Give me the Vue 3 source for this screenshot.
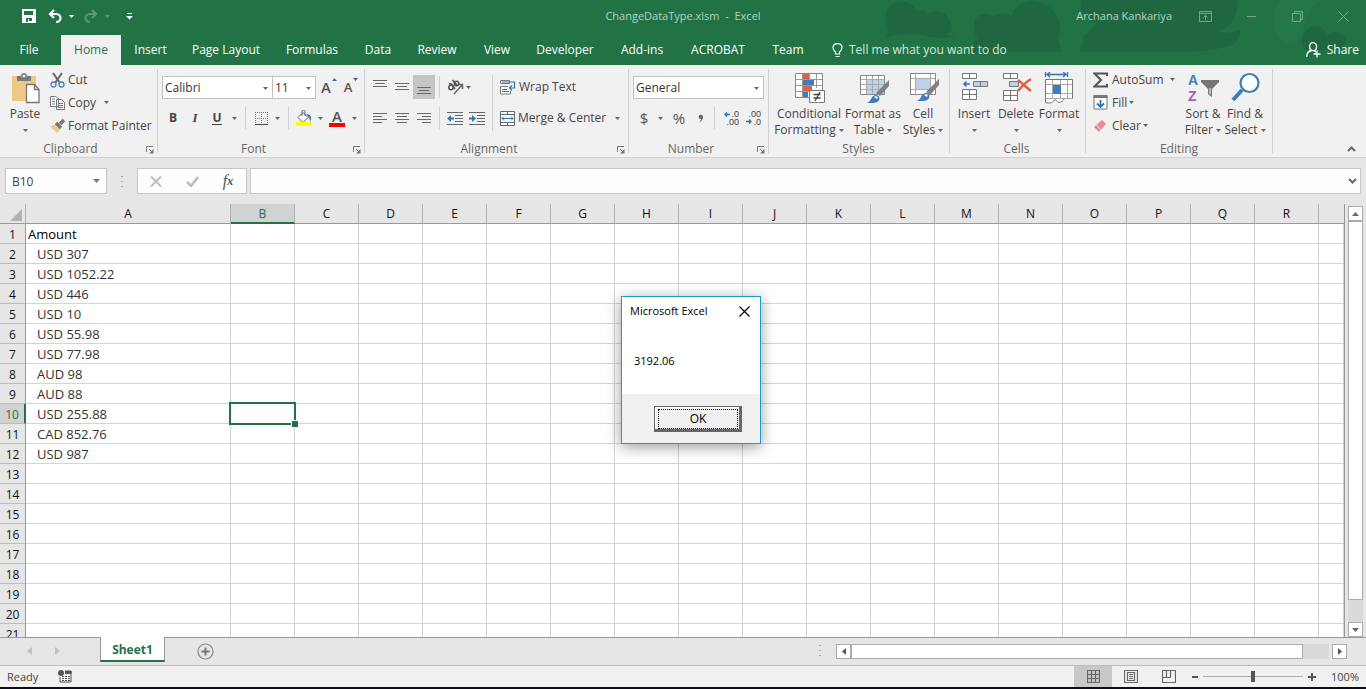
<script setup>
import { h, ref } from 'vue'

const Caret = () =>
  h('svg', { class: 'caret', width: 5, height: 3, viewBox: '0 0 5 3', 'aria-hidden': 'true' }, [
    h('path', { d: 'M0 0h5L2.5 3z', fill: 'currentColor' }),
  ])

const Launcher = () =>
  h('svg', { width: 8, height: 8, viewBox: '0 0 8 8', 'aria-hidden': 'true' }, [
    h('path', { d: 'M.5 6V.5H7M3 3l3 3', fill: 'none', stroke: '#777' }),
    h('path', { d: 'M7.5 3v4.5H3z', fill: '#777' }),
  ])

const tabs = ['File', 'Home', 'Insert', 'Page Layout', 'Formulas', 'Data', 'Review', 'View', 'Developer', 'Add-ins', 'ACROBAT', 'Team']
const columns = 'ABCDEFGHIJKLMNOPQR'.split('')
const amounts = ['Amount', 'USD 307', 'USD 1052.22', 'USD 446', 'USD 10', 'USD 55.98', 'USD 77.98', 'AUD 98', 'AUD 88', 'USD 255.88', 'CAD 852.76', 'USD 987']
const rows = Array.from({ length: 21 }, (_, i) => ({ n: i + 1, a: amounts[i] || '' }))
const zoom = ref(50)
const nameBox = ref('B10')
const formula = ref('')
</script>

<template>
  <div class="excel">
    <header class="top">
      <svg class="clouds" width="500" height="52" viewBox="866 0 500 52" aria-hidden="true">
        <g fill="#1f6740">
          <path d="M886 38c3-5 3-9 1-13-4-10 0-20 10-23 9-2 17 3 20 10 4-2 8-2 11 2 5-4 14-4 19 2 6 7 6 15 0 19 3 2 7 0 9-2-4 7-16 5-24 4-16-3-32-5-46 1z" />
          <path d="M978 38c-7-9-5-19 2-23 7-3 12 0 14 2 5-5 13-4 17-1C1016 3 1028-1 1039 2c18 5 25 22 19 36l3 14h-91l5-12z" />
          <path d="M1081 0h157c0 18-8 30-22 31 9 3 17 2 24-1 2 10-6 15-15 17-20 5-52 7-84 5h-62c4-6 5-12 4-15l14-14c-12-4-18-13-16-23z" />
          <path d="M1305 50c-7-9-2-21 9-24 7 0 11 4 13 8 7-4 16-2 19 5 1 6-3 9-6 11z" />
        </g>
        <path d="M1304 27c3-10 8-27 22-27h-46c-9 12-9 28 0 38 8 9 20 8 24-11z" fill="#277a4c" opacity=".55" />
      </svg>
      <div class="titlebar">
        <div class="quick">
          <button aria-label="Save"><svg width="14" height="14" viewBox="0 0 14 14"><path d="M0 0h14v14H0z" fill="#fff" /><path d="M3 2h8v4H2V2zM4 9h6v3H7v-2H6v3H4z" fill="#217346" /></svg></button>
          <button aria-label="Undo"><svg width="14" height="14" viewBox="0 0 14 14"><path d="M6 1L2 5l4 4M2 5h6c6 0 6 8 0 8" fill="none" stroke="#fff" stroke-width="2.200" /></svg><Caret /></button>
          <button class="dim" aria-label="Redo"><svg width="14" height="14" viewBox="0 0 14 14"><path d="M8 1l4 4-4 4M12 5H6c-6 0-6 8 0 8" fill="none" stroke="currentColor" stroke-width="2.200" /></svg><Caret /></button>
          <button aria-label="Customize Quick Access Toolbar"><svg width="7" height="7" viewBox="0 0 7 7"><path d="M1 .5h5" stroke="#fff" /><path d="M0 3h7L3.500 6.500z" fill="#fff" /></svg></button>
        </div>
        <h1>ChangeDataType.xlsm&nbsp; -&nbsp; Excel</h1>
        <div class="account">
          <span>Archana Kankariya</span>
          <button aria-label="Ribbon Display Options"><svg width="13" height="11" viewBox="0 0 13 11"><path d="M.5 .5h12v10H.5zM.5 2.500h12M6.500 9V4.500M4.500 6.500l2-2 2 2" /></svg></button>
          <button aria-label="Minimize"><svg width="11" height="11" viewBox="0 0 11 11"><path d="M1 5.500h9" /></svg></button>
          <button aria-label="Restore"><svg width="11" height="11" viewBox="0 0 11 11"><path d="M.5 2.500h8v8h-8zM2.500 2V.5h8v8H9" /></svg></button>
          <button aria-label="Close"><svg width="11" height="11" viewBox="0 0 11 11"><path d="M.5 .5l10 10M10.500 .5l-10 10" /></svg></button>
        </div>
      </div>
      <nav class="tabbar">
        <div class="tabs">
          <button v-for="t in tabs" :key="t" :class="{ active: t === 'Home' }">{{ t }}</button>
        </div>
        <button class="tell"><svg width="11" height="15" viewBox="0 0 11 15"><path d="M3.500 11V9C-1 5 1 .7 5.500 .7S12 5 7.500 9v2zM3.500 13.500h4" fill="none" stroke="#fff" stroke-width="1.200" /></svg>Tell me what you want to do</button>
        <button class="share"><svg width="15" height="16" viewBox="0 0 15 16"><path d="M.7 15c0-4 2-6 5-6.500M7 .7c5 0 4.500 8 0 8s-4.500-8 0-8zM8.500 9l1.500 1M11 8.500v7M7.500 12h7" fill="none" stroke="#fff" stroke-width="1.300" /></svg>Share</button>
      </nav>
    </header>

    <section class="ribbon" aria-label="Home">
      <div class="group clipboard">
        <div class="body">
          <button class="big">
            <svg width="32" height="32" viewBox="0 0 32 32">
              <path d="M3 4h24v25H3z" fill="#eec981" />
              <path d="M8 9V4h4C12 0 18 0 18 4h4v5z" fill="#7a7a7a" /><circle cx="15" cy="4" r="1.500" fill="#f1f1f1" />
              <path d="M17.500 12.500h8l4.500 5v13H17.500z" fill="#fff" stroke="#777" stroke-width="1.300" /><path d="M25.500 12.500v5H30" fill="none" stroke="#777" stroke-width="1.300" />
            </svg>
            <span>Paste</span><Caret />
          </button>
          <div class="stack">
            <button><svg width="16" height="16" viewBox="0 0 16 16"><path d="M3 1l7 10M12 1L5 11" stroke="#666" stroke-width="2" /><circle cx="3.500" cy="12.500" r="2.500" fill="none" stroke="#4a7fb8" stroke-width="1.300" /><circle cx="11.500" cy="12.500" r="2.500" fill="none" stroke="#4a7fb8" stroke-width="1.300" /></svg>Cut</button>
            <button><svg width="16" height="16" viewBox="0 0 16 16"><path d="M.5 1.500h5l3 2v8h-8zM6.500 4.500h5l3 3v7h-8z" fill="#fff" stroke="#777" /><path d="M2 4h3M2 6.500h3M2 9h3M8 8.500h5M8 10.500h5M8 12.500h5" stroke="#4a7fb8" /></svg>Copy<i /><Caret /></button>
            <button><svg width="16" height="16" viewBox="0 0 16 16"><path d="M0 8l5-1 5 5-3 3z" fill="#eec981" /><path d="M6 5l5 5M10 6l4-4" stroke="#777" stroke-width="3.500" /></svg>Format Painter</button>
          </div>
        </div>
        <footer>Clipboard<button aria-label="Clipboard settings"><Launcher /></button></footer>
      </div>

      <div class="group font">
        <div class="body lines">
          <div class="line">
            <span class="combo face"><select aria-label="Font"><option>Calibri</option></select><Caret /></span>
            <span class="combo size"><select aria-label="Font size"><option>11</option></select><Caret /></span>
            <button class="cell letter up" aria-label="Increase Font Size"><span>A</span><svg width="5" height="3" viewBox="0 0 5 3"><path d="M0 3h5L2.500 0z" fill="#2e75b6" /></svg></button>
            <button class="cell letter down" aria-label="Decrease Font Size"><span>A</span><svg width="5" height="3" viewBox="0 0 5 3"><path d="M0 0h5L2.500 3z" fill="#2e75b6" /></svg></button>
          </div>
          <div class="line">
            <button class="cell"><b>B</b></button>
            <button class="cell italic">I</button>
            <button class="cell"><b class="under">U</b></button>
            <button class="drop" aria-label="Underline style"><Caret /></button>
            <span class="sep" />
            <button class="mid" aria-label="Borders"><svg width="13" height="13" viewBox="0 0 13 13"><path d="M0 .5h13M0 6.500h13M.5 0v12M6.500 0v12M12.500 0v12" stroke="#777" stroke-dasharray="1 1" /><path d="M0 12.500h13" stroke="#444" /></svg></button>
            <button class="drop" aria-label="Border options"><Caret /></button>
            <span class="sep" />
            <button class="mid" aria-label="Fill Color"><svg width="16" height="16" viewBox="0 0 16 16"><path d="M7 2.500l5 5-5 5-5-5z" fill="#fff" stroke="#666" /><path d="M6 6V1.500c0-2 3-2 3 0V6" fill="none" stroke="#666" /><path d="M10 4c6 0 6 5 4 8 0-3-1-4-4-8z" fill="#4a7fb8" /><path d="M0 12h16v4H0z" fill="#ff0" /></svg></button>
            <button class="drop" aria-label="Fill options"><Caret /></button>
            <button class="cell fontcolor" aria-label="Font Color"><b>A</b></button>
            <button class="drop" aria-label="Font color options"><Caret /></button>
          </div>
        </div>
        <footer>Font<button aria-label="Font settings"><Launcher /></button></footer>
      </div>

      <div class="group align">
        <div class="body">
          <div class="lines">
            <div class="line">
              <button class="cell" aria-label="Top Align"><svg class="bars" width="14" height="14" viewBox="0 0 14 14"><path d="M0 -.5h14M2 2.500h10M0 5.500h14" transform="translate(0 1)" /></svg></button>
              <button class="cell" aria-label="Middle Align"><svg class="bars" width="14" height="14" viewBox="0 0 14 14"><path d="M0 3.500h14M2 6.500h10M0 9.500h14" /></svg></button>
              <button class="cell pressed" aria-label="Bottom Align"><svg class="bars" width="14" height="14" viewBox="0 0 14 14"><path d="M0 7.500h14M2 10.500h10M0 13.500h14" /></svg></button>
              <span class="sep tight" />
              <button class="cell" aria-label="Orientation"><svg width="17" height="16" viewBox="0 0 17 16"><path d="M7 15L15 6M11 5.500h4.500V10" fill="none" stroke="#666" stroke-width="1.500" /><g fill="none" stroke="#555" stroke-width="1.600"><circle cx="4" cy="8.500" r="2.200" /><path d="M2 5c2-1 3 0 6 5M5.500 1l5 6" /><circle cx="9.500" cy="4.500" r="2.200" /></g></svg></button>
              <Caret />
            </div>
            <div class="line">
              <button class="cell" aria-label="Align Left"><svg class="bars" width="14" height="12" viewBox="0 0 14 12"><path d="M0 1.500h14M0 4.500h9M0 7.500h14M0 10.500h9" /></svg></button>
              <button class="cell" aria-label="Center"><svg class="bars" width="14" height="12" viewBox="0 0 14 12"><path d="M0 1.500h14M2 4.500h10M0 7.500h14M2 10.500h10" /></svg></button>
              <button class="cell" aria-label="Align Right"><svg class="bars" width="14" height="12" viewBox="0 0 14 12"><path d="M0 1.500h14M5 4.500h9M0 7.500h14M5 10.500h9" /></svg></button>
              <span class="sep tight" />
              <button class="cell" aria-label="Decrease Indent"><svg class="bars" width="16" height="13" viewBox="0 0 16 13"><path d="M0 .5h16M8 3.500h8M8 6.500h8M8 9.500h8M0 12.500h16" /><path d="M0 6.500L4 3v2.500h3v2H4V10z" class="solid" /></svg></button>
              <button class="cell" aria-label="Increase Indent"><svg class="bars" width="16" height="13" viewBox="0 0 16 13"><path d="M0 .5h16M8 3.500h8M8 6.500h8M8 9.500h8M0 12.500h16" /><path d="M7 6.500L3 3v2.500H0v2h3V10z" class="solid" /></svg></button>
            </div>
          </div>
          <span class="sep tall" />
          <div class="lines text">
            <button class="line"><svg width="16" height="16" viewBox="0 0 16 16"><path d="M.5 1.500h9v3h-9zM.5 7.500V15h10v-3M.5 7.500H8" fill="#fff" stroke="#777" /><path d="M2 3h12.500v6H10M12 6.500L9.500 9l2.500 2.500M2 10.500h5M2 12.500h7" fill="none" stroke="#2e75b6" stroke-width="1.200" /></svg>Wrap Text</button>
            <button class="line"><svg width="15" height="15" viewBox="0 0 15 15"><path d="M.5 .5h14v14H.5zM.5 3.500h14M.5 11.500h14M7.500 0v3M7.500 12v3" fill="#fff" stroke="#666" /><path d="M2 7.500h11M4 5.500l-2 2 2 2M11 5.500l2 2-2 2" fill="none" stroke="#2e75b6" /></svg>Merge &amp; Center<i /><Caret /></button>
          </div>
        </div>
        <footer>Alignment<button aria-label="Alignment settings"><Launcher /></button></footer>
      </div>

      <div class="group number">
        <div class="body lines">
          <div class="line"><span class="combo format"><select aria-label="Number format"><option>General</option></select><Caret /></span></div>
          <div class="line">
            <button class="cell glyph">$</button>
            <button class="drop" aria-label="Currency options"><Caret /></button>
            <button class="cell glyph">%</button>
            <button class="mid" aria-label="Comma Style"><svg width="6" height="9" viewBox="0 0 6 9"><path d="M1 1.500C2 0 5 .5 5 3S3 8 1 8.500C2.500 7 3 6 3 5 1 5 0 3 1 1.500z" fill="#666" /></svg></button>
            <span class="sep" />
            <button class="cell dec" aria-label="Increase Decimal"><span>.0</span><span>.00</span><svg width="6" height="5" viewBox="0 0 6 5"><path d="M6 2.500H1M3 .5l-2 2 2 2" fill="none" stroke="#2e75b6" stroke-width="1.300" /></svg></button>
            <button class="cell dec less" aria-label="Decrease Decimal"><span>.00</span><span>.0</span><svg width="6" height="5" viewBox="0 0 6 5"><path d="M0 2.500h5M3 .5l2 2-2 2" fill="none" stroke="#2e75b6" stroke-width="1.300" /></svg></button>
          </div>
        </div>
        <footer>Number<button aria-label="Number settings"><Launcher /></button></footer>
      </div>

      <div class="group styles">
        <div class="body">
          <button class="big">
            <svg width="32" height="32" viewBox="0 0 32 32"><path d="M2.500 1.500h27v24h-27z" fill="#fff" stroke="#888" /><path d="M10 2h6v5h-6zM10 13h9v6h-9z" fill="#dc6245" /><path d="M10 7h11v6H10zM10 19h5v6h-5z" fill="#3f7dba" /><path d="M9.500 2v23M23.500 2v14M16.500 2v5M3 7.500h26M3 13.500h26M3 19.500h14" stroke="#999" fill="none" /><path d="M16.500 18.500h15v12h-15z" fill="#fff" stroke="#777" /><path d="M20.500 22.500h7M20.500 26h7M27 20l-5 9" stroke="#444" stroke-width="1.300" /></svg>
            <span>Conditional<br />Formatting <Caret /></span>
          </button>
          <button class="big">
            <svg width="32" height="32" viewBox="0 0 32 32"><path d="M3.500 3.500h24v19h-24z" fill="#fff" stroke="#888" /><path d="M10 8h17v14H10z" fill="#bdd2ea" /><path d="M9.500 4v18M15.500 4v18M21.500 4v18M4 7.500h23M4 12.500h23M4 17.500h23" stroke="#aaa" fill="none" /><path d="M32 8v6l-9 10-4-3z" fill="#808080" /><path d="M10 31c5-2 4-8 9-8 3 0 4 3 3 5-2 4-8 3-12 3z" fill="#3f7dba" /><path d="M17 25c2-2 5 0 3 2z" fill="#fff" /></svg>
            <span>Format as<br />Table <Caret /></span>
          </button>
          <button class="big">
            <svg width="32" height="32" viewBox="0 0 32 32"><path d="M3.500 1.500h25v21h-25z" fill="#fff" stroke="#888" /><path d="M9 7h14v10H9z" fill="#bdd2ea" /><path d="M8.500 2v20M23.500 2v20M4 6.500h24M4 17.500h24" stroke="#aaa" fill="none" /><path d="M32 7v6l-9 10-4-3z" fill="#808080" /><path d="M10 29c5-2 4-8 9-8 3 0 4 3 3 5-2 4-8 3-12 3z" fill="#3f7dba" /><path d="M17 23c2-2 5 0 3 2z" fill="#fff" /></svg>
            <span>Cell<br />Styles <Caret /></span>
          </button>
        </div>
        <footer>Styles</footer>
      </div>

      <div class="group cells">
        <div class="body">
          <button class="big">
            <svg width="32" height="32" viewBox="0 0 32 32"><g fill="#fff" stroke="#777"><path d="M4.500 1.500h14v5h-14zM11.500 1.500v5M4.500 17.500h14v10h-14zM11.500 17.500v10M4.500 22.500h14" /><path d="M15.500 9.500h14v5h-14zM22.500 9.500v5" fill="#bdd2ea" /></g><path d="M12 12H6M8.500 9.500L6 12l2.500 2.500" fill="none" stroke="#2e75b6" stroke-width="1.600" /></svg>
            <span>Insert</span><Caret />
          </button>
          <button class="big">
            <svg width="32" height="32" viewBox="0 0 32 32"><g fill="#fff" stroke="#777"><path d="M3.500 1.500h14v5h-14zM10.500 1.500v5M3.500 18.500h14v10h-14zM10.500 18.500v10M3.500 23.500h14" /><path d="M9.500 9.500h9v5h-9z" fill="#bdd2ea" /></g><path d="M18 8c4 3 9 8 13 11M31 7c-5 3-9 7-13 12" fill="none" stroke="#dc6245" stroke-width="2.500" /></svg>
            <span>Delete</span><Caret />
          </button>
          <button class="big">
            <svg width="32" height="32" viewBox="0 0 32 32"><path d="M2.500 0v5M24.500 0v5M4 2.500h19M7 0L4 2.500 7 5M20 0l3 2.500L20 5" fill="none" stroke="#2e75b6" stroke-width="1.300" /><path d="M2.500 7.500h27v19h-8c-3 5-7 5-9 1-4 4-7 4-10 3z" fill="#fff" stroke="#777" /><path d="M9.500 8v18M17.500 8v18M24.500 8v18M3 12.500h26M3 21.500h26M3 26.500h26" fill="none" stroke="#aaa" /><path d="M10 13h8v9h-8z" fill="#3f7dba" /></svg>
            <span>Format</span><Caret />
          </button>
        </div>
        <footer>Cells</footer>
      </div>

      <div class="group editing">
        <div class="body">
          <div class="stack">
            <button><svg width="15" height="16" viewBox="0 0 15 16"><path d="M14 4V1.500H1.500L8 8l-6.500 6.500H14V12" fill="none" stroke="#555" stroke-width="2" /></svg>AutoSum<i /><Caret /></button>
            <button><svg width="15" height="15" viewBox="0 0 15 15"><path d="M1 1h13v13H1z" fill="#fff" stroke="#777" /><path d="M.5 0h14v3H.5z" fill="#777" /><path d="M7.500 5v7M4 8.500L7.500 12 11 8.500" fill="none" stroke="#2e75b6" stroke-width="1.800" /></svg>Fill <Caret /></button>
            <button><svg width="15" height="15" viewBox="0 0 15 15"><path d="M1 9l8-7 4 4-7 8z" fill="#e88a96" /><path d="M3.500 7l4.500 5" stroke="#f7d5d9" /></svg>Clear <Caret /></button>
          </div>
          <button class="big">
            <span class="az" aria-hidden="true"><b>A</b><b>Z</b><svg width="18" height="17" viewBox="0 0 18 17"><path d="M0 0h18v2l-7 7v8l-4-3V9L0 2z" fill="#777" /><path d="M9 8v6" stroke="#fff" /></svg></span>
            <span>Sort &amp;<br />Filter <Caret /></span>
          </button>
          <button class="big">
            <svg width="32" height="32" viewBox="0 0 32 32"><path d="M4 28L13 18" stroke="#3f7dba" stroke-width="4" /><circle cx="20.500" cy="11" r="9" fill="#fff" stroke="#3f7dba" stroke-width="2.200" /></svg>
            <span>Find &amp;<br />Select <Caret /></span>
          </button>
        </div>
        <footer>Editing</footer>
      </div>
      <button class="collapse" aria-label="Collapse the Ribbon"><svg width="9" height="6" viewBox="0 0 9 6"><path d="M1 5l3.500-3.500L8 5" fill="none" stroke="#666" stroke-width="2" /></svg></button>
    </section>

    <section class="formulabar" aria-label="Formula bar">
      <div class="field name"><input v-model="nameBox" aria-label="Name Box" /><button aria-label="Names"><svg width="7" height="4" viewBox="0 0 7 4"><path d="M0 0h7L3.500 4z" fill="#777" /></svg></button></div>
      <span class="dots" />
      <div class="field tools">
        <button aria-label="Cancel"><svg width="12" height="11" viewBox="0 0 12 11"><path d="M1 .5l10 10M11 .5L1 10.500" stroke="#bbb" stroke-width="1.800" /></svg></button>
        <button aria-label="Enter"><svg width="13" height="11" viewBox="0 0 13 11"><path d="M1 6l4 4 7-9" fill="none" stroke="#bbb" stroke-width="2.500" /></svg></button>
        <button class="fx" aria-label="Insert Function">f<small>x</small></button>
      </div>
      <div class="field formula"><input v-model="formula" aria-label="Formula" /><button aria-label="Expand Formula Bar"><svg width="9" height="6" viewBox="0 0 9 6"><path d="M1 1l3.500 3.500L8 1" fill="none" stroke="#666" stroke-width="2" /></svg></button></div>
    </section>

    <main class="work">
      <div class="sheet">
        <table>
          <colgroup><col class="c-head" /><col class="c-a" /><col v-for="c in 17" :key="c" class="c-n" /><col /></colgroup>
          <thead>
            <tr><th class="corner"><svg width="12" height="12" viewBox="0 0 12 12"><path d="M12 0v12H0z" fill="#b1b1b1" /></svg></th><th v-for="c in columns" :key="c" scope="col" :class="{ sel: c === 'B' }">{{ c }}</th><th /></tr>
          </thead>
          <tbody>
            <tr v-for="r in rows" :key="r.n">
              <th scope="row" :class="{ sel: r.n === 10 }">{{ r.n }}</th>
              <td :class="{ indent: r.n > 1 }">{{ r.a }}</td>
              <td v-for="c in 18" :key="c" :class="{ current: r.n === 10 && c === 1 }"></td>
            </tr>
          </tbody>
        </table>
      </div>
      <div class="vscroll">
        <button aria-label="Scroll up"><svg width="7" height="4" viewBox="0 0 7 4"><path d="M0 4h7L3.500 0z" fill="#666" /></svg></button>
        <span class="thumb" />
        <span class="track" />
        <button aria-label="Scroll down"><svg width="7" height="4" viewBox="0 0 7 4"><path d="M0 0h7L3.500 4z" fill="#666" /></svg></button>
      </div>
    </main>

    <div class="sheetbar">
      <div class="nav">
        <button aria-label="Previous sheet"><svg width="5" height="8" viewBox="0 0 5 8"><path d="M5 0v8L0 4z" fill="#c0c0c0" /></svg></button>
        <button aria-label="Next sheet"><svg width="5" height="8" viewBox="0 0 5 8"><path d="M0 0v8l5-4z" fill="#c0c0c0" /></svg></button>
      </div>
      <button class="sheettab">Sheet1</button>
      <button class="add" aria-label="New sheet"><svg width="17" height="17" viewBox="0 0 17 17"><circle cx="8.500" cy="8.500" r="7.500" fill="none" stroke="#888" stroke-width="1.200" /><path d="M8.500 4.500v8M4.500 8.500h8" stroke="#777" stroke-width="2" /></svg></button>
      <span class="dots" />
      <div class="hscroll">
        <button aria-label="Scroll left"><svg width="4" height="7" viewBox="0 0 4 7"><path d="M4 0v7L0 3.500z" fill="#555" /></svg></button>
        <span class="thumb" />
        <span class="track" />
        <button aria-label="Scroll right"><svg width="4" height="7" viewBox="0 0 4 7"><path d="M0 0v7l4-3.500z" fill="#555" /></svg></button>
      </div>
    </div>

    <footer class="status">
      <span class="ready">Ready</span>
      <button class="macro" aria-label="Record Macro"><svg width="14" height="13" viewBox="0 0 14 13"><path d="M7 1h6v11H2V7" fill="none" stroke="#555" /><path d="M7 1h6.500v3H7z" fill="#555" /><path d="M4 6.500h8M4 8.500h8M4 10.500h8" stroke="#555" stroke-dasharray="2 1" /><circle cx="3" cy="3" r="3" fill="#555" /></svg></button>
      <div class="views">
        <button class="on" aria-label="Normal"><svg width="13" height="13" viewBox="0 0 13 13"><path d="M.5 .5h12v12H.5zM4.500 0v13M8.500 0v13M0 4.500h13M0 8.500h13" /></svg></button>
        <button aria-label="Page Layout"><svg width="14" height="13" viewBox="0 0 14 13"><path d="M.5 .5h13v12H.5zM3.500 2.500h7v8h-7zM5 4.500h4M5 6.500h4M5 8.500h4" /></svg></button>
        <button aria-label="Page Break Preview"><svg width="14" height="13" viewBox="0 0 14 13"><path d="M.5 .5h13v12H.5zM.5 7.500h8M4.500 .5v7M8.500 .5v7" /></svg></button>
      </div>
      <div class="zoom">
        <button aria-label="Zoom out"><svg width="6" height="8" viewBox="0 0 6 8"><path d="M0 4h6" stroke="#555" stroke-width="2" /></svg></button>
        <input v-model="zoom" type="range" min="0" max="100" aria-label="Zoom" />
        <button aria-label="Zoom in"><svg width="8" height="8" viewBox="0 0 8 8"><path d="M0 4h8M4 0v8" stroke="#555" stroke-width="2" /></svg></button>
        <button class="pct">100%</button>
      </div>
    </footer>
    <div class="taskbar" />

    <div class="dialog" role="dialog" aria-labelledby="dlg-title">
      <div class="dlg-head"><h2 id="dlg-title">Microsoft Excel</h2><button aria-label="Close dialog"><svg width="11" height="11" viewBox="0 0 11 11"><path d="M.5 .5l10 10M10.500 .5l-10 10" stroke="#000" stroke-width="1.200" /></svg></button></div>
      <p>3192.06</p>
      <div class="dlg-foot"><button><span>OK</span></button></div>
    </div>
  </div>
</template>

<style>
body { overflow: hidden; }
</style>

<style scoped>
.excel { position: relative; display: flex; flex-direction: column; height: 100vh; overflow: hidden; background: #e6e6e6; color: #444; font: 12px/16px "Open Sans", "Noto Sans", sans-serif; }
.excel *, .excel *::before, .excel *::after { box-sizing: border-box; }
button, input, select { margin: 0; padding: 0; border: 0; background: none; color: inherit; font: inherit; border-radius: 0; }
button { display: flex; align-items: center; justify-content: center; white-space: nowrap; }
svg { display: block; flex: none; }
.caret { color: #666; display: inline-block; vertical-align: middle; }
i { flex: 1; }

.top { position: relative; background: #217346; color: #fff; flex: none; }
.clouds { position: absolute; top: 0; right: 0; }
.titlebar { position: relative; display: grid; grid-template-columns: 1fr auto 1fr; align-items: center; height: 32px; color: #b5d2c1; }
.titlebar h1 { margin: 0; font-size: 11px; font-weight: 400; }
.quick { display: flex; align-items: center; padding-left: 20px; gap: 10px; color: #fff; }
.quick button { gap: 7px; min-width: 18px; }
.quick .caret { color: inherit; }
.quick .dim { color: #589777; }
.account { display: flex; justify-content: flex-end; align-items: center; font-size: 11px; }
.account button { width: 46px; height: 30px; }
.account span { margin-right: 10px; }
.account path { fill: none; stroke: #72a98a; }
.tabbar { position: relative; display: flex; height: 33px; padding-top: 3px; }
.tabs { display: grid; grid-template-columns: 61px 60px 59px 92px 80px 52px 66px 54px 82px 72px 80px 60px; }
.tabs button:first-child { padding-right: 3px; }
.tabs .active { background: #f1f1f1; color: #217346; }
.tell { margin-left: 14px; gap: 6px; color: #d6e7dd; }
.share { margin-left: auto; margin-right: 7px; gap: 6px; }

.ribbon { position: relative; display: flex; flex: none; height: 93px; padding-top: 3px; background: #f1f1f1; border-bottom: 1px solid #d2d0d2; }
.group { display: flex; flex-direction: column; flex: none; height: 89px; position: relative; }
.group::after { content: ""; position: absolute; right: 0; top: 1px; bottom: 4px; width: 1px; background: #d2d0d2; }
.group > footer { position: relative; display: flex; justify-content: center; height: 16px; padding-right: 20px; color: #666; }
.group > footer button { position: absolute; right: 4px; top: 5px; }
.body { flex: 1; display: flex; }
.clipboard { width: 158px; }
.clipboard > footer { padding-right: 17px; }
.font { width: 207px; padding-left: 4px; }
.align { width: 264px; padding-left: 4px; }
.number { width: 140px; padding-left: 4px; }
.styles { width: 181px; padding-left: 4px; }
.cells { width: 136px; padding-left: 3px; }
.editing { width: 187px; padding-left: 7px; }
.styles > footer, .cells > footer { padding-right: 6px; }
.editing > footer { padding-right: 8px; }
.big { flex-direction: column; justify-content: flex-start; height: 70px; padding-top: 4px; gap: 2px; width: 42px; }
.big > .caret { margin-top: 5px; }
.big span { text-align: center; }
.clipboard .big { width: 50px; }
.styles .big:nth-child(1) { width: 72px; }
.styles .big:nth-child(2) { width: 56px; }
.styles .big:nth-child(3) { width: 44px; }
.cells .big:nth-child(3) { width: 44px; }
.stack { display: grid; grid-auto-rows: 23px; align-content: start; }
.stack button { justify-content: flex-start; gap: 2px; }
.editing .stack { width: 89px; }
.editing .stack button { padding-right: 5px; }
.editing .stack svg { margin-right: 2px; }
.clipboard .stack i { flex: none; width: 4px; }
.lines { display: flex; flex-direction: column; padding-top: 4px; gap: 1px; }
.line { display: flex; align-items: center; height: 30px; }
.cell { width: 22px; height: 24px; }
.mid { width: 20px; height: 24px; }
.number .mid { width: 16px; }
.number .line .cell:nth-child(3) { width: 28px; }
.number .drop { width: 10px; }
.drop { width: 12px; height: 24px; }
.pressed { background: #c5c5c5; }
.bars path { stroke: #666; fill: none; }
.bars .solid { stroke: none; fill: #2e75b6; }
.sep { width: 11px; height: 22px; background: linear-gradient(#d2d0d2, #d2d0d2) center / 1px 100% no-repeat; }
.sep.tight { width: 9px; }
.sep.tall { width: 8px; height: 56px; margin-top: 7px; }
.text { padding-left: 4px; width: 124px; }
.text button { justify-content: flex-start; gap: 3px; }
.combo { position: relative; display: flex; height: 23px; border: 1px solid #c1c1c1; background: #fff; }
.combo select { appearance: none; width: 100%; padding: 1px 2px 0; outline: 0; color: #333; }
.combo .caret { position: absolute; right: 4px; top: 10px; pointer-events: none; }
.face { width: 111px; }
.size { width: 44px; margin-left: -1px; margin-right: 2px; }
.format { width: 131px; }
.letter { font-size: 15px; font-weight: 600; color: #555; align-items: center; gap: 1px; }
.letter svg { align-self: flex-start; margin-top: 3px; }
.letter.down { font-size: 13px; }
.italic { font: italic bold 13px/16px "Liberation Serif", serif; }
.under { border-bottom: 1px solid #444; line-height: 13px; }
.fontcolor b { width: 16px; border-bottom: 4px solid red; font-size: 15px; line-height: 13px; color: #555; font-weight: 600; }
.glyph { font-size: 15px; color: #555; }
.dec { position: relative; flex-direction: column; align-items: flex-end; padding-right: 3px; font: 9px/8px "Liberation Sans", sans-serif; color: #444; }
.dec svg { position: absolute; left: 4px; top: 6px; }
.dec.less svg { top: 13px; }
.az { position: relative; display: grid; width: 32px; height: 32px; color: #3f7dba; font: 14px/16px "Liberation Sans", sans-serif; }
.az b { text-align: left; padding-left: 1px; }
.az b + b { color: #9b60ba; }
.az svg { position: absolute; left: 14px; top: 8px; }
.collapse { position: absolute; right: 10px; bottom: 5px; }

.formulabar { display: flex; flex: none; height: 46px; padding: 10px 5px; }
.field { display: flex; height: 26px; background: #fdfdfd; border: 1px solid #c6c6c6; }
.field input { flex: 1; min-width: 0; padding: 2px 6px 0; outline: 0; }
.name { width: 102px; }
.name button { padding: 0 6px; }
.formula button { padding: 0 3px; }
.dots { width: 30px; background: radial-gradient(circle, #aaa 1px, transparent 1px) center / 30px 5px; }
.formulabar .dots { height: 15px; margin-top: 6px; }
.tools { width: 110px; margin-right: 3px; }
.tools button { flex: 1; }
.fx { font: italic 16px/16px "Liberation Serif", serif; color: #555; }
.fx small { font-size: 12px; font-weight: 700; }
.formula { flex: 1; }

.work { flex: 1; min-height: 0; display: flex; border-bottom: 1px solid #999; }
.sheet { flex: 1; min-width: 0; overflow: hidden; border-right: 1px solid #999; background: linear-gradient(#e6e6e6, #e6e6e6) top / 100% 19px no-repeat, #fff; }
table { width: 100%; table-layout: fixed; border-collapse: separate; border-spacing: 0; color: #333; font-size: 13px; line-height: 17px; }
.c-head { width: 26px; }
.c-a { width: 205px; }
.c-n { width: 64px; }
th, td { padding: 2px 0 0; height: 20px; font-weight: 400; border: solid #d4d4d4; border-width: 0 1px 1px 0; white-space: nowrap; }
th { background: #e6e6e6; color: #111; font-size: 12px; }
thead th { padding: 0; line-height: 19px; border-color: #b1b1b1; border-bottom-color: #999; }
thead th:last-child { border-right: 0; }
tbody th { border-right-color: #999; border-bottom-color: #bbb; }
.corner svg { margin: 3px 0 0 10px; }
thead .sel { background: #d2d2d2; color: #217346; border-bottom: 2px solid #217346; padding-top: 1px; line-height: 17px; }
tbody .sel { background: #d2d2d2; color: #217346; border-right: 2px solid #217346; }
td { padding-left: 2px; }
tbody tr:first-child td { color: #000; }
td.indent { padding-left: 11px; }
.current { position: relative; }
.current::before { content: ""; position: absolute; inset: -2px; border: 2px solid #217346; }
.current::after { content: ""; position: absolute; right: -4px; bottom: -4px; width: 7px; height: 7px; background: #217346; border: solid #fff; border-width: 1px 0 0 1px; }
.vscroll { display: flex; flex-direction: column; width: 15px; margin: 2px 3px 0; }
.vscroll button, .hscroll button { background: #fff; border: 1px solid #ababab; width: 15px; height: 15px; flex: none; }
.vscroll .thumb { flex: 1; background: #fff; border: 1px solid #ababab; }
.vscroll .track { height: 22px; background: #dadada; }

.sheetbar { display: flex; flex: none; height: 28px; border-bottom: 1px solid #bbb; }
.nav { display: flex; width: 100px; padding-left: 15px; }
.nav button { width: 28px; height: 25px; }
.sheettab { width: 65px; height: 25px; margin-top: -1px; padding-top: 3px; background: #fff; border: solid #999; border-width: 0 1px; border-bottom: 2px solid #217346; color: #217346; font-weight: 700; }
.add { margin-left: 32px; height: 26px; }
.sheetbar .dots { height: 15px; margin: 5px 1px 0 auto; }
.hscroll { display: flex; flex: 0 1 511px; margin: 6px 19px 0 0; height: 15px; }
.hscroll .thumb { flex: 1; background: #fff; border: 1px solid #ababab; }
.hscroll .track { width: 26px; margin-right: 3px; background: #dadada; }

.status { display: flex; flex: none; align-items: center; height: 21px; background: #f1f1f1; font-size: 11px; }
.ready { margin: 0 20px 0 7px; }
.views { display: flex; margin-left: auto; height: 21px; }
.views button { width: 38px; }
.views .on { background: #c8c8c8; }
.views path { fill: none; stroke: #666; stroke-width: 1.2; }
.zoom { display: flex; align-items: center; margin: 0 7px 0 4px; gap: 3px; }
.zoom input { appearance: none; width: 100px; height: 12px; background: linear-gradient(#aaa, #aaa) center / 100% 1px no-repeat; margin: 0 2px; }
.zoom input::-webkit-slider-thumb { appearance: none; width: 4px; height: 11px; background: #555; border: 0; }
.pct { margin-left: 12px; }
.taskbar { flex: none; height: 2px; background: #0b0d1c; }

.dialog { position: absolute; left: 621px; top: 296px; width: 140px; display: flex; flex-direction: column; background: #fff; color: #000; border: 1px solid #1a9fbf; box-shadow: 0 3px 14px rgba(0, 0, 0, .4); }
.dlg-head { display: flex; align-items: center; justify-content: space-between; height: 28px; padding: 0 10px 0 8px; }
.dialog h2 { margin: 0; font-size: 11px; font-weight: 400; }
.dialog p { margin: 0; padding: 28px 12px 25px; font-size: 11px; }
.dlg-foot { display: flex; justify-content: flex-end; padding: 12px 18px 11px; background: #f0f0f0; }
.dlg-foot button { width: 88px; height: 26px; padding: 2px; border: 1px solid #666; box-shadow: inset -2px -2px #696969, inset 1px 1px #fff; }
.dlg-foot span { width: 80px; height: 20px; line-height: 18px; border: 1px dotted #000; }
</style>
